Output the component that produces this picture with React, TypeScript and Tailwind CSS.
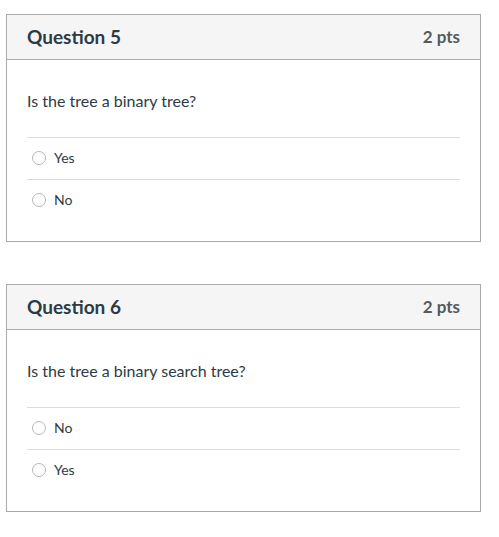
import React from "react";

type Question = {
  title: string;
  points: string;
  text: string;
  answers: string[];
};

const questions: Question[] = [
  { title: "Question 5", points: "2 pts", text: "Is the tree a binary tree?", answers: ["Yes", "No"] },
  { title: "Question 6", points: "2 pts", text: "Is the tree a binary search tree?", answers: ["No", "Yes"] },
];

const QuestionCard: React.FC<{ q: Question }> = ({ q }) => {
  return (
    <div className="border border-[#aaaaaa] bg-white">
      {/* Header */}
      <div className="flex items-center justify-between h-[45px] px-5 bg-[#f5f5f5] border-b border-[#aaaaaa]">
        <span className="text-[19px] font-bold text-[#2d3b45]">{q.title}</span>
        <span className="text-[17px] font-bold text-[#555a5e]">{q.points}</span>
      </div>

      {/* Body */}
      <div className="px-5 pt-[31px] pb-[20px]">
        <p className="text-[16px] leading-[20px] text-[#2d3b45]">{q.text}</p>
        <div className="mt-[26px]">
          {q.answers.map((a) => (
            <label key={a} className="flex items-center h-[42px] pb-[2px] border-t border-[#dddddd] pl-[5px] cursor-pointer">
              <span className="w-[14px] h-[14px] rounded-full border border-[#b8b8b8] bg-white" />
              <span className="ml-[8px] text-[14px] text-[#2d3b45]">{a}</span>
            </label>
          ))}
        </div>
      </div>
    </div>
  );
};

export default function App() {
  return (
    <div className="w-[499px] min-h-[537px] bg-white pt-[14px] pl-[6px] pr-[18px]" style={{ fontFamily: "Lato, 'Liberation Sans', sans-serif" }}>
      <div className="flex flex-col gap-[42px]">
        {questions.map((q) => (
          <QuestionCard key={q.title} q={q} />
        ))}
      </div>
    </div>
  );
}
